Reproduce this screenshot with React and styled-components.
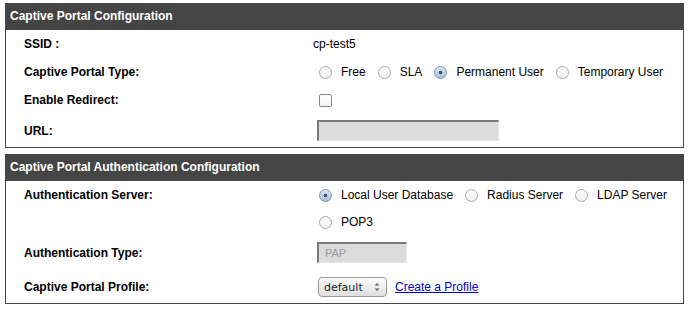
import React, { useState } from "react";
import styled, { createGlobalStyle } from "styled-components";

const GlobalStyle = createGlobalStyle`
  body {
    margin: 0;
    background: #fff;
    font-family: "Liberation Sans", Arial, sans-serif;
    font-size: 12px;
    color: #000;
  }
`;

const App = () => {
  const [portalType, setPortalType] = useState("permanent");
  const [authServer, setAuthServer] = useState("local");
  const [redirect, setRedirect] = useState(false);

  const portalTypes = [
    { id: "free", label: "Free" },
    { id: "sla", label: "SLA" },
    { id: "permanent", label: "Permanent User" },
    { id: "temporary", label: "Temporary User" },
  ];

  const authServers = [
    { id: "local", label: "Local User Database" },
    { id: "radius", label: "Radius Server" },
    { id: "ldap", label: "LDAP Server" },
    { id: "pop3", label: "POP3" },
  ];

  return (
    <>
      <GlobalStyle />
      <Page>
        <Panel>
          <PanelHeader>Captive Portal Configuration</PanelHeader>
          <Row>
            <Label>SSID :</Label>
            <Value>cp-test5</Value>
          </Row>
          <Row>
            <Label>Captive Portal Type:</Label>
            <Options>
              {portalTypes.map((t) => (
                <Option key={t.id}>
                  <Radio
                    type="radio"
                    name="portalType"
                    checked={portalType === t.id}
                    onChange={() => setPortalType(t.id)}
                  />
                  {t.label}
                </Option>
              ))}
            </Options>
          </Row>
          <Row>
            <Label>Enable Redirect:</Label>
            <Options>
              <Checkbox
                type="checkbox"
                checked={redirect}
                onChange={(e) => setRedirect(e.target.checked)}
              />
            </Options>
          </Row>
          <Row>
            <Label>URL:</Label>
            <Options>
              <TextInput type="text" disabled width={182} />
            </Options>
          </Row>
        </Panel>

        <Panel>
          <PanelHeader>Captive Portal Authentication Configuration</PanelHeader>
          <Row>
            <Label top>Authentication Server:</Label>
            <Options wrap="true">
              {authServers.map((s) => (
                <Option key={s.id}>
                  <Radio
                    type="radio"
                    name="authServer"
                    checked={authServer === s.id}
                    onChange={() => setAuthServer(s.id)}
                  />
                  {s.label}
                </Option>
              ))}
            </Options>
          </Row>
          <Row>
            <Label>Authentication Type:</Label>
            <Options>
              <TextInput type="text" disabled width={90} placeholder="PAP" />
            </Options>
          </Row>
          <Row last>
            <Label>Captive Portal Profile:</Label>
            <Options>
              <SelectWrap>
                <Select defaultValue="default">
                  <option value="default">default</option>
                </Select>
                <SelectArrows width="8" height="12" viewBox="0 0 8 12">
                  <path d="M1.5 4.5 L4 2 L6.5 4.5 Z" fill="#666" />
                  <path d="M1.5 7.5 L4 10 L6.5 7.5 Z" fill="#666" />
                </SelectArrows>
              </SelectWrap>
              <ProfileLink href="#">Create a Profile</ProfileLink>
            </Options>
          </Row>
        </Panel>
      </Page>
    </>
  );
};

export default App;

const Page = styled.div`
  padding: 3px 5px 0 5px;
  width: 679px;
  display: flex;
  flex-direction: column;
  gap: 6px;
`;

const Panel = styled.div`
  border: 1px solid #444;
  border-top: none;
  background: #fff;
`;

const PanelHeader = styled.div`
  background: #454545;
  color: #fff;
  font-weight: bold;
  font-size: 12px;
  height: 27px;
  line-height: 27px;
  padding-left: 5px;
  margin: 0 -1px;
`;

const Row = styled.div`
  display: grid;
  grid-template-columns: 289px 1fr;
  align-items: center;
  padding: ${(p) => (p.last ? "8px" : "6px")} 0 6px 18px;
  line-height: 16px;
`;

const Label = styled.div`
  font-weight: bold;
  align-self: ${(p) => (p.top ? "start" : "center")};
`;

const Value = styled.div`
  align-self: center;
`;

const Options = styled.div`
  display: flex;
  flex-wrap: ${(p) => (p.wrap ? "wrap" : "nowrap")};
  align-items: center;
  row-gap: 11px;
  column-gap: 12px;
  padding-left: 6px;
  min-height: 16px;
`;

const Option = styled.label`
  display: flex;
  align-items: center;
  gap: 9px;
  white-space: nowrap;
  height: 16px;
`;

const Radio = styled.input`
  appearance: none;
  margin: 0;
  width: 13px;
  height: 13px;
  border-radius: 50%;
  border: 1px solid #a8a8a8;
  background: linear-gradient(#ffffff, #f0f0f0);
  box-sizing: border-box;

  &:checked {
    border-color: #7f93ad;
    background: radial-gradient(circle, #4d5866 0 1.6px, transparent 2.2px),
      linear-gradient(#dbe6f4, #a8bfdc);
  }
`;

const Checkbox = styled.input`
  appearance: none;
  margin: 0;
  width: 13px;
  height: 13px;
  border-radius: 2px;
  border: 1px solid #8a8a8a;
  background: linear-gradient(#ffffff, #f2f2f2);
  box-sizing: border-box;
`;

const TextInput = styled.input`
  width: ${(p) => p.width}px;
  height: 21px;
  box-sizing: border-box;
  background: #dcdcdc;
  border-style: solid;
  border-width: 2px 1px 1px 2px;
  border-color: #7a7a7a #e8e8e8 #e8e8e8 #7a7a7a;
  padding: 0 6px;
  font-family: "Liberation Sans", Arial, sans-serif;
  font-size: 11px;
  margin: 0 0 0 -2px;

  &::placeholder {
    color: #9a9a9a;
  }
`;

const SelectWrap = styled.div`
  position: relative;
  width: 69px;
  height: 20px;
  margin-left: -1px;
`;

const Select = styled.select`
  appearance: none;
  width: 100%;
  height: 100%;
  border: 1px solid #9a9a9a;
  border-radius: 4px;
  background: linear-gradient(#fdfdfd, #dedede);
  font-family: "DejaVu Sans", "Liberation Sans", sans-serif;
  font-size: 11px;
  color: #222;
  padding: 0 0 0 5px;
  margin: 0;
`;

const SelectArrows = styled.svg`
  position: absolute;
  right: 6px;
  top: 4px;
  pointer-events: none;
`;

const ProfileLink = styled.a`
  color: #0000cc;
  text-decoration: underline;
  margin-left: -4px;
`;
